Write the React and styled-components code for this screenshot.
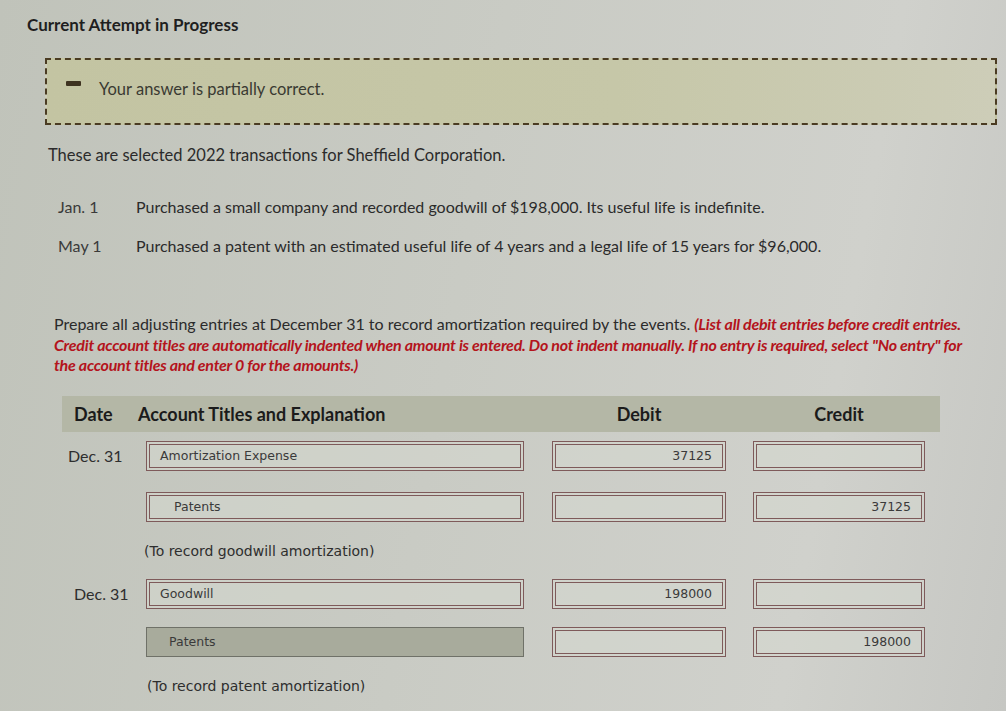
import React from "react";
import styled, { createGlobalStyle } from "styled-components";

const GlobalStyle = createGlobalStyle`
  html, body { margin: 0; padding: 0; }
  body {
    background: linear-gradient(100deg, #c0c3ba 0%, #c9cbc4 45%, #d0d1cc 80%, #c6c7c3 100%);
    font-family: Lato, "Open Sans", sans-serif;
    color: #2b2b2b;
    width: 1006px;
    height: 711px;
    overflow: hidden;
  }
`;

const Page = styled.div`
  padding: 15px 0 0 0;
`;

const Title = styled.h2`
  margin: 0 0 0 27px;
  font-size: 17px;
  line-height: 20px;
  font-weight: 700;
  color: #1f1f1f;
`;

const Feedback = styled.div`
  margin: 23px 0 0 45px;
  width: 952px;
  height: 67px;
  border: 2px dashed #4a3b22;
  background: linear-gradient(90deg, #c3c4a2 0%, #c6c7a8 60%, #cdcdb8 100%);
  display: flex;
  align-items: center;
  padding: 0 0 6px 19px;
  box-sizing: border-box;
  gap: 18px;
`;

const MinusMark = styled.span`
  width: 15px;
  height: 5px;
  border-radius: 1px;
  background: #3e3320;
  margin-top: -10px;
`;

const FeedbackText = styled.span`
  font-size: 16.5px;
  color: #3a3a32;
`;

const Intro = styled.p`
  margin: 20px 0 0 48px;
  font-size: 16.5px;
  line-height: 20px;
`;

const Transactions = styled.div`
  margin: 32px 0 0 58px;
  display: grid;
  grid-template-columns: 78px 1fr;
  row-gap: 19px;
  font-size: 16px;
  line-height: 20px;
`;

const TxDate = styled.span`
  color: #3a3a3a;
`;

const TxText = styled.span``;

const Instructions = styled.p`
  margin: 58px 0 0 54px;
  width: 930px;
  font-size: 16px;
  line-height: 20.5px;
  color: #2b2b2b;
`;

const Red = styled.em`
  color: #b4141c;
  font-weight: 700;
  font-style: italic;
  letter-spacing: -0.25px;
`;

const Journal = styled.div`
  margin: 20px 0 0 62px;
  width: 878px;
`;

const HeaderRow = styled.div`
  display: grid;
  grid-template-columns: 76px 414px 174px 27px 172px 15px;
  height: 36px;
  align-items: center;
  background: #b4b7a6;
  font-size: 18px;
  font-weight: 700;
  color: #1b1b1b;
`;

const HeadCell = styled.span`
  padding-left: ${(p) => p.$pad || 0}px;
  text-align: ${(p) => p.$align || "left"};
`;

const EntryRow = styled.div`
  display: grid;
  grid-template-columns: 84px 378px 28px 174px 27px 172px;
  align-items: center;
  margin-top: ${(p) => p.$top}px;
`;

const DateCell = styled.span`
  font-size: 16px;
  color: #2e2e2e;
  padding-left: ${(p) => p.$pad || 6}px;
`;

const Field = styled.div`
  height: 30px;
  box-sizing: border-box;
  border: 4px double #7e5a5a;
  background: ${(p) => (p.$filled ? "#a8ab9c" : "rgba(214, 216, 208, 0.55)")};
  ${(p) => p.$filled && "border: 1px solid #6f7168;"}
  display: flex;
  align-items: center;
  justify-content: ${(p) => (p.$num ? "flex-end" : "flex-start")};
  padding: 0 ${(p) => (p.$num ? 10 : 0)}px 0 ${(p) => p.$indent || 8}px;
  font-family: "DejaVu Sans", Verdana, sans-serif;
  font-size: 12.5px;
  color: #3a3a3a;
  grid-column: ${(p) => p.$col};
`;

const Explanation = styled.div`
  margin: ${(p) => p.$top}px 0 0 ${(p) => p.$left}px;
  font-family: "DejaVu Sans", Verdana, sans-serif;
  font-size: 14px;
  line-height: 18px;
  color: #2e2e2e;
`;

const entries = [
  {
    date: "Dec. 31",
    datePad: 6,
    note: "(To record goodwill amortization)",
    noteLeft: 82,
    lines: [
      { account: "Amortization Expense", indent: 10, debit: "37125", credit: "", top: 9 },
      { account: "Patents", indent: 24, debit: "", credit: "37125", top: 21 },
    ],
  },
  {
    date: "Dec. 31",
    datePad: 12,
    note: "(To record patent amortization)",
    noteLeft: 85,
    lines: [
      { account: "Goodwill", indent: 10, debit: "198000", credit: "", top: 19 },
      { account: "Patents", indent: 22, debit: "", credit: "198000", top: 18, filled: true },
    ],
  },
];

export default function App() {
  return (
    <>
      <GlobalStyle />
      <Page>
        <Title>Current Attempt in Progress</Title>
        <Feedback>
          <MinusMark />
          <FeedbackText>Your answer is partially correct.</FeedbackText>
        </Feedback>
        <Intro>These are selected 2022 transactions for Sheffield Corporation.</Intro>
        <Transactions>
          <TxDate>Jan. 1</TxDate>
          <TxText>
            Purchased a small company and recorded goodwill of $198,000. Its useful life is indefinite.
          </TxText>
          <TxDate>May 1</TxDate>
          <TxText>
            Purchased a patent with an estimated useful life of 4 years and a legal life of 15 years for $96,000.
          </TxText>
        </Transactions>
        <Instructions>
          Prepare all adjusting entries at December 31 to record amortization required by the events.{" "}
          <Red>(List all debit entries before credit entries.</Red>
          <br />
          <Red>
            Credit account titles are automatically indented when amount is entered. Do not indent manually. If
            no entry is required, select "No entry" for
          </Red>
          <br />
          <Red>the account titles and enter 0 for the amounts.)</Red>
        </Instructions>
        <Journal>
          <HeaderRow>
            <HeadCell $pad={12}>Date</HeadCell>
            <HeadCell>Account Titles and Explanation</HeadCell>
            <HeadCell $align="center">Debit</HeadCell>
            <span />
            <HeadCell $align="center">Credit</HeadCell>
            <span />
          </HeaderRow>
          {entries.map((e, i) => (
            <React.Fragment key={i}>
              {e.lines.map((l, j) => (
                <EntryRow key={j} $top={l.top}>
                  {j === 0 ? <DateCell $pad={e.datePad}>{e.date}</DateCell> : <span />}
                  <Field $col="2" $indent={l.indent} $filled={l.filled}>
                    {l.account}
                  </Field>
                  <Field $col="4" $num>
                    {l.debit}
                  </Field>
                  <Field $col="6" $num>
                    {l.credit}
                  </Field>
                </EntryRow>
              ))}
              <Explanation $top={20} $left={e.noteLeft}>
                {e.note}
              </Explanation>
            </React.Fragment>
          ))}
        </Journal>
      </Page>
    </>
  );
}
